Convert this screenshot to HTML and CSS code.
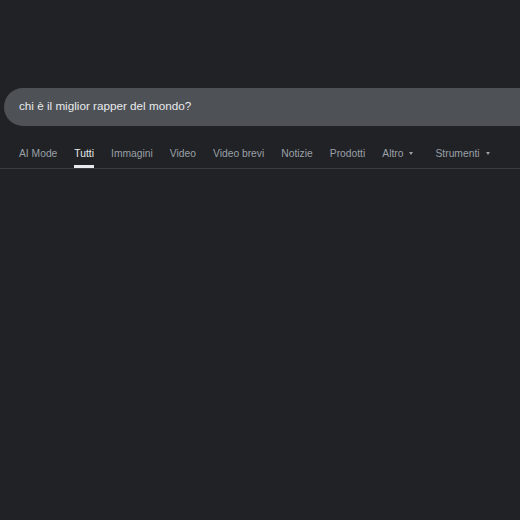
FILE: index.html
```html
<html>
<head>
<meta charset="utf-8">
<link rel="stylesheet" href="styles.css">
</head>
<body>
	<div class="top"></div>
	<div class="searchbar">
		<span class="query">chi è il miglior rapper del mondo?</span>
	</div>
	<div class="tabs">
		<span class="tab">AI Mode</span>
		<span class="tab active">Tutti</span>
		<span class="tab">Immagini</span>
		<span class="tab">Video</span>
		<span class="tab">Video brevi</span>
		<span class="tab">Notizie</span>
		<span class="tab">Prodotti</span>
		<span class="tab">Altro<i class="caret"></i></span>
		<span class="tab tools">Strumenti<i class="caret"></i></span>
	</div>
</body>
</html>
```

FILE: styles.css
```css
body {
	margin: 0;
	background-color: #212226;
	font-family: "Liberation Sans", Arial, sans-serif;
	height: 520px;
	overflow: hidden;
}
.top {
	height: 88px;
}
.searchbar {
	margin-left: 4px;
	height: 38px;
	background-color: #4e5155;
	border-radius: 19px 0 0 19px;
	padding-left: 15px;
	box-sizing: border-box;
}
.query {
	display: block;
	font-size: 11.7px;
	line-height: 36px;
	color: #e8eaed;
}
.tabs {
	display: flex;
	gap: 17px;
	padding-left: 19px;
	border-bottom: 1px solid #3a3c40;
}
.tab {
	font-size: 10.3px;
	line-height: 14px;
	padding-top: 21px;
	padding-bottom: 4px;
	color: #9aa0a6;
	border-bottom: 3px solid transparent;
	white-space: nowrap;
}
.tab.active {
	color: #e8eaed;
	border-bottom-color: #e8eaed;
}
.tools {
	margin-left: 5px;
}
.caret {
	display: inline-block;
	vertical-align: middle;
	margin-left: 6px;
	margin-top: -2px;
	border-left: 2.5px solid transparent;
	border-right: 2.5px solid transparent;
	border-top: 3px solid #9aa0a6;
}
```
